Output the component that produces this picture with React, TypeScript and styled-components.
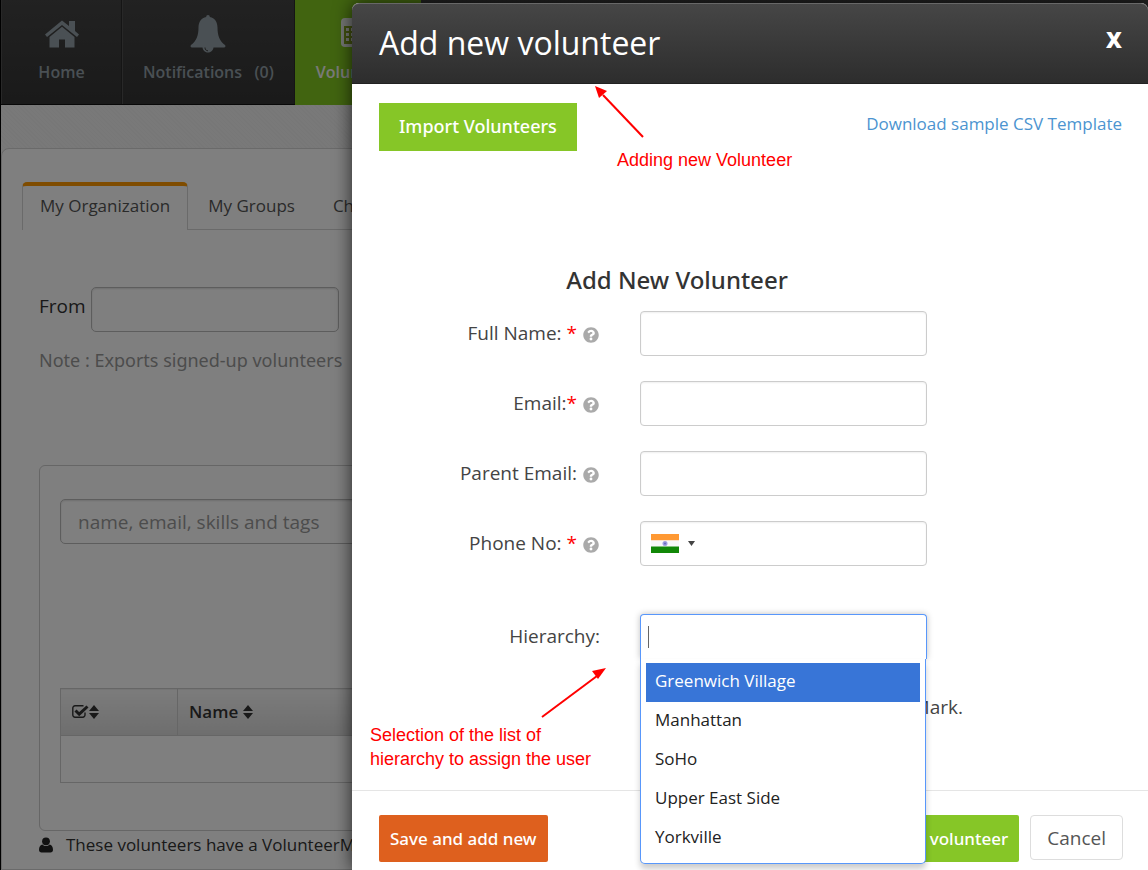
import React, { useState } from 'react';
import styled, { createGlobalStyle } from 'styled-components';
import { FaQuestionCircle } from 'react-icons/fa';

const GlobalStyle = createGlobalStyle`
  *, *::before, *::after { box-sizing: border-box; }
  body {
    margin: 0;
    background: #fff;
    color: #333;
    font: 17px/24px "Open Sans", "Noto Sans", sans-serif;
    overflow: hidden;
  }
  button, input { font: inherit; }
`;

const largeText = '19px/24px "Open Sans", "Noto Sans", sans-serif';

const Screen = styled.div`
  position: relative;
  height: 100vh;
  min-height: 870px;
  overflow: hidden;
`;

const Page = styled.div`
  height: 100%;
  display: flex;
  flex-direction: column;
  border-left: 1px solid #000;
  background: #f0f0f0 repeating-linear-gradient(45deg, #eee 0 1px, #f2f2f2 1px 3px);
`;

const Nav = styled.nav`
  display: flex;
  height: 105px;
  flex: none;
  background: linear-gradient(#444, #343434);
  border-bottom: 1px solid #111;
`;

const NavItem = styled.a<{ $active?: boolean }>`
  display: flex;
  flex-direction: column;
  align-items: center;
  gap: 6px;
  height: ${p => (p.$active ? '105px' : '104px')};
  padding: 14px 20px 0;
  min-width: ${p => (p.$active ? '124px' : '121px')};
  border-left: 1px solid ${p => (p.$active ? '#82c820' : '#505050')};
  border-right: 1px solid ${p => (p.$active ? '#82c820' : '#2a2a2a')};
  background: ${p => (p.$active ? '#82c820' : 'transparent')};
  color: ${p => (p.$active ? '#f4f4f4' : '#94a0a8')};
  font-size: 16px;
  font-weight: 600;
  text-decoration: none;
  white-space: pre;

  svg { display: block; }
`;

const Panel = styled.main`
  flex: 1;
  margin-top: 43px;
  padding: 33px 20px 0;
  border: 1px solid #d4d4d4;
  border-radius: 8px 8px 0 0;
  background: #fff;
`;

const Tabs = styled.div`
  display: flex;
  height: 48px;
  border-bottom: 1px solid #d4d4d4;
`;

const Tab = styled.button<{ $active?: boolean }>`
  height: 48px;
  padding: ${p => (p.$active ? '0 17px 4px' : '0 18px 0 20px')};
  border: 0 solid #d4d4d4;
  border-width: ${p => (p.$active ? '4px 1px 0' : '0')};
  border-top-color: #f90;
  border-radius: 5px 5px 0 0;
  background: ${p => (p.$active ? '#fff' : 'transparent')};
  color: #555;
  white-space: nowrap;
`;

const TabContent = styled.section`
  padding: 57px 17px 0;
`;

const FromRow = styled.label`
  display: flex;
  align-items: flex-start;
  gap: 5px;
  height: 44px;
  color: #333;
  font: ${largeText};
  line-height: 38px;
`;

const PageInput = styled.input<{ $wide?: boolean }>`
  width: ${p => (p.$wide ? '100%' : '248px')};
  height: 45px;
  padding: 0 17px;
  border: 1px solid #bbb;
  border-radius: 5px;
  background: #fff;
  box-shadow: inset 0 1px 2px #0002;
  font: ${largeText};
  &::placeholder { color: #999; opacity: 1; }
`;

const Note = styled.p`
  margin: 17px 0 93px;
  color: #999;
  font: 18px/24px "Noto Sans", "Open Sans", sans-serif;
  white-space: nowrap;
`;

const ListBox = styled.div`
  height: 366px;
  padding: 33px 20px 0;
  border: 1px solid #ccc;
  border-radius: 6px;
`;

const Table = styled.table`
  width: 100%;
  margin-top: 144px;
  border-collapse: collapse;
  table-layout: fixed;

  th {
    height: 47px;
    padding: 0 11px 1px;
    text-align: left;
    font-weight: 600;
    background: linear-gradient(#f8f8f8, #dcdcdc);
    white-space: nowrap;
  }
  th, td { border: 1px solid #ccc; }
  th:first-child { width: 117px; }
  td { height: 47px; }
`;

const HeadContent = styled.span<{ $gap: number }>`
  display: flex;
  align-items: center;
  gap: ${p => p.$gap}px;
  svg { flex: none; }
`;

const Legend = styled.p`
  display: flex;
  align-items: center;
  gap: 13px;
  margin: 2px 0 0;
  white-space: nowrap;
`;

const Backdrop = styled.div`
  position: absolute;
  inset: 0;
  background: rgba(0, 0, 0, 0.5);
`;

const Modal = styled.section`
  position: absolute;
  top: 3px;
  left: 352px;
  right: 0;
  bottom: 0;
  display: flex;
  flex-direction: column;
  border-radius: 7px 7px 0 0;
  background: #fff;
  box-shadow: 0 0 18px rgba(0, 0, 0, 0.7);
`;

const ModalHeader = styled.header`
  display: flex;
  align-items: center;
  justify-content: space-between;
  height: 81px;
  flex: none;
  padding: 0 26px 2px 27px;
  border-top: 1px solid #686868;
  border-bottom: 1px solid #222;
  border-radius: 7px 7px 0 0;
  background: linear-gradient(#464646, #2d2d2d);
  color: #fff;
`;

const Title = styled.h1`
  margin: 0;
  font-size: 32px;
  line-height: 40px;
  font-weight: 400;
`;

const CloseButton = styled.button`
  padding: 0 0 8px;
  border: 0;
  background: none;
  color: #fff;
  font-size: 22px;
  line-height: 24px;
  font-weight: 800;
`;

const ModalBody = styled.div`
  position: relative;
  flex: 1;
  padding: 19px 26px 0 27px;
`;

const Toolbar = styled.div`
  display: flex;
  justify-content: space-between;
  align-items: flex-start;
  a { margin-top: 9px; color: #4c94d0; text-decoration: none; }
`;

const Button = styled.button<{ $tone: 'green' | 'orange' | 'plain' }>`
  height: ${p => (p.$tone === 'plain' ? '45px' : '47px')};
  padding: 0 ${p => (p.$tone === 'plain' ? '16px' : '11px')};
  border: ${p => (p.$tone === 'plain' ? '1px solid #ddd' : '0')};
  border-radius: ${p => (p.$tone === 'plain' ? '4px' : '2px')};
  background: ${p => ({ green: '#86c627', orange: '#de601e', plain: '#fff' })[p.$tone]};
  color: ${p => (p.$tone === 'plain' ? '#555' : '#fff')};
  font: ${p => (p.$tone === 'plain' ? largeText : '500 17px/24px "Noto Sans", "Open Sans", sans-serif')};
  white-space: nowrap;
`;

const ImportButton = styled(Button)`
  height: 48px;
  padding: 0 20px 2px;
  border-radius: 0;
  font: 500 18px/24px "Noto Sans", "Open Sans", sans-serif;
`;

const Form = styled.form`
  max-width: 650px;
  margin: 113px 0 0 -27px;
`;

const FormTitle = styled.h2`
  margin: 0 0 15px;
  text-align: center;
  font: 500 24px/32px "Noto Sans", "Open Sans", sans-serif;
`;

const Field = styled.div<{ $spaced?: boolean }>`
  display: grid;
  grid-template-columns: 248px 287px;
  column-gap: 40px;
  align-items: center;
  margin-top: ${p => (p.$spaced ? '48px' : '0')};
  margin-bottom: 25px;
`;

const Label = styled.label`
  display: flex;
  align-items: center;
  justify-content: flex-end;
  padding-bottom: 2px;
  white-space: pre;
  color: #444;
  font: ${largeText};
  svg { margin: 4px 1px 0 6px; color: #aaa; }
`;

const Star = styled.span`
  color: #f00;
`;

const Control = styled.div`
  position: relative;
`;

const TextInput = styled.input<{ $open?: boolean; $phone?: boolean }>`
  display: block;
  width: 100%;
  height: 45px;
  padding: 0 12px 0 ${p => (p.$phone ? '62px' : '12px')};
  border: 1px solid ${p => (p.$open ? '#5897fb' : '#ccc')};
  border-radius: ${p => (p.$open ? '4px 4px 0 0' : '4px')};
  border-bottom-width: ${p => (p.$open ? '0' : '1px')};
  background: #fff;
  box-shadow: ${p => (p.$open ? '0 0 6px rgba(0, 0, 0, 0.25)' : 'inset 0 1px 2px #0001')};
  outline: 0;
`;

const CountryButton = styled.button`
  position: absolute;
  inset: 1px auto 1px 1px;
  display: flex;
  align-items: center;
  gap: 9px;
  padding: 0 10px;
  border: 0;
  background: none;
`;

const Caret = styled.span`
  position: absolute;
  top: 12px;
  left: 8px;
  width: 1px;
  height: 22px;
  background: #666;
`;

const Options = styled.ul`
  position: absolute;
  z-index: 2;
  top: 45px;
  left: 0;
  right: 1px;
  margin: 0;
  padding: 4px 5px 5px;
  list-style: none;
  border: 1px solid #5897fb;
  border-top: 0;
  border-radius: 0 0 5px 5px;
  background: #fff;
  box-shadow: 0 5px 6px rgba(0, 0, 0, 0.2);
`;

const Option = styled.li<{ $selected: boolean }>`
  padding: 6px 9px 9px;
  color: ${p => (p.$selected ? '#fff' : '#222')};
  background: ${p => (p.$selected ? '#3875d7' : 'transparent')};
`;

const Mandatory = styled.p`
  margin: 36px 39px 0 0;
  text-align: right;
  color: #444;
  font: ${largeText};
`;

const ModalFooter = styled.footer`
  display: flex;
  align-items: flex-start;
  gap: 11px;
  flex: none;
  height: 80px;
  padding: 24px 25px 0 27px;
  border-top: 1px solid #e5e5e5;
`;

const Spacer = styled.span`
  flex: 1;
`;

const Callout = styled.div<{ $x: number; $y: number }>`
  position: absolute;
  left: ${p => p.$x}px;
  top: ${p => p.$y}px;
  color: #f00;
  font: 18px/24px "Liberation Sans", Arial, sans-serif;
  white-space: pre;
  pointer-events: none;
`;

const Arrow = styled.svg<{ $x: number; $y: number }>`
  position: absolute;
  left: ${p => p.$x}px;
  top: ${p => p.$y}px;
  pointer-events: none;
`;

const HomeIcon = () => (
  <svg width="34" height="40" viewBox="0 0 34 40" fill="currentColor" aria-hidden="true">
    <path d="M17 6.500 0 20.500l2 2.500L17 11l15 12 2-2.500-4-3.500V7h-6v5z" />
    <path d="M17 12.800 4.500 23v10.500h9.500V25.500h6v8h9.500V23z" />
  </svg>
);

const BellIcon = () => (
  <svg width="36" height="40" viewBox="0 0 36 40" fill="currentColor" aria-hidden="true">
    <path d="M18 1c1.200 0 1.800.8 1.800 2 5 .8 7.700 5 7.700 10.500 0 8 2 13.500 7.500 17.500.8 1 .5 2.500-1 2.500H23.500C23 37 20.500 38.500 18 38.500S13 37 12.500 33.500H2C.5 33.500.2 32 1 31c5.500-4 7.500-9.500 7.500-17.500C8.500 8 11.200 3.800 16.200 3c0-1.200.6-2 1.800-2z" />
    <path d="M15 33.500c0 2 1.200 3.300 3 3.300" fill="none" stroke="#3c3c3c" strokeWidth="1" />
  </svg>
);

const RosterIcon = () => (
  <svg width="34" height="40" viewBox="0 0 34 40" aria-hidden="true">
    <rect x="0" y="4" width="34" height="29" rx="4" fill="#e8ece8" />
    <rect x="3" y="12" width="28" height="18" fill="#82a020" />
    <g fill="#e8ece8">
      {[14, 19, 24].map(y => [5, 10, 15, 20, 25].map(x => <rect key={`${x}-${y}`} x={x} y={y} width="3" height="3" />))}
    </g>
  </svg>
);

const CheckIcon = () => (
  <svg width="17" height="15" viewBox="0 0 17 15" fill="none" stroke="currentColor" aria-hidden="true">
    <path d="M13 8.500V11a2.200 2.200 0 0 1-2.200 2.200H3A2.200 2.200 0 0 1 .8 11V4A2.200 2.200 0 0 1 3 1.800h8.500" strokeWidth="1.400" />
    <path d="m3.500 6.500 3.700 3.700 8.300-7.700" strokeWidth="3" />
  </svg>
);

const UserIcon = () => (
  <svg width="14" height="16" viewBox="0 0 14 16" fill="#222" aria-hidden="true">
    <circle cx="7" cy="4.300" r="3.900" />
    <path d="M3.500 7.500C1.300 8 0 9.800 0 12.800 0 14.500 1 15.500 2.500 15.500h9c1.500 0 2.500-1 2.500-2.700 0-3-1.300-4.800-3.500-5.300-1 1-2.100 1.500-3.500 1.500s-2.500-.5-3.500-1.500z" />
  </svg>
);

const SortIcon = () => (
  <svg width="10" height="14" viewBox="0 0 10 14" fill="currentColor" aria-hidden="true">
    <path d="M5 0 10 6H0zM5 14 0 8h10z" />
  </svg>
);

const Flag = () => (
  <svg width="28" height="19" viewBox="0 0 28 19" aria-hidden="true">
    <path fill="#ff9933" d="M0 0h28v6.500H0z" />
    <path fill="#f8f8f8" d="M0 6.500h28v6H0z" />
    <path fill="#128807" d="M0 12.500h28V19H0z" />
    <circle cx="14" cy="9.500" r="2.500" fill="#9b9bdd" />
    <circle cx="14" cy="9.500" r="1" fill="#6666bb" />
  </svg>
);

type FieldInfo = { id: string; label: string; required?: boolean; phone?: boolean };

const fields: FieldInfo[] = [
  { id: 'full-name', label: 'Full Name: ', required: true },
  { id: 'email', label: 'Email:', required: true },
  { id: 'parent-email', label: 'Parent Email:' },
  { id: 'phone', label: 'Phone No: ', required: true, phone: true },
];

const places = ['Greenwich Village', 'Manhattan', 'SoHo', 'Upper East Side', 'Yorkville'];

export default function App() {
  const [selected, setSelected] = useState(0);

  return (
    <Screen>
      <GlobalStyle />
      <Page>
        <Nav>
          <NavItem href="#home"><HomeIcon />Home</NavItem>
          <NavItem href="#notifications"><BellIcon />{'Notifications   (0)'}</NavItem>
          <NavItem href="#volunteers" $active><RosterIcon />Volunteers</NavItem>
        </Nav>
        <Panel>
          <Tabs>
            <Tab $active>My Organization</Tab>
            <Tab>My Groups</Tab>
            <Tab>Check-in</Tab>
          </Tabs>
          <TabContent>
            <FromRow>From<PageInput /></FromRow>
            <Note>Note : Exports signed-up volunteers</Note>
            <ListBox>
              <PageInput $wide aria-label="Search volunteers" placeholder="name, email, skills and tags" />
              <Table>
                <thead>
                  <tr>
                    <th><HeadContent $gap={0}><CheckIcon /><SortIcon /></HeadContent></th>
                    <th><HeadContent $gap={5}>Name<SortIcon /></HeadContent></th>
                  </tr>
                </thead>
                <tbody><tr><td colSpan={2} /></tr></tbody>
              </Table>
            </ListBox>
            <Legend><UserIcon />These volunteers have a VolunteerMark</Legend>
          </TabContent>
        </Panel>
      </Page>
      <Backdrop />
      <Modal role="dialog" aria-labelledby="dialog-title">
        <ModalHeader>
          <Title id="dialog-title">Add new volunteer</Title>
          <CloseButton aria-label="Close">X</CloseButton>
        </ModalHeader>
        <ModalBody>
          <Toolbar>
            <ImportButton $tone="green">Import Volunteers</ImportButton>
            <a href="#template">Download sample CSV Template</a>
          </Toolbar>
          <Form>
            <FormTitle>Add New Volunteer</FormTitle>
            {fields.map(f => (
              <Field key={f.id}>
                <Label htmlFor={f.id}>
                  {f.label}{f.required && <Star>*</Star>}<FaQuestionCircle size={16} />
                </Label>
                <Control>
                  <TextInput id={f.id} $phone={f.phone} />
                  {f.phone && (
                    <CountryButton type="button" aria-label="Country">
                      <Flag />
                      <svg width="7" height="5" viewBox="0 0 7 5" aria-hidden="true"><path d="M0 0h7L3.500 5z" fill="#444" /></svg>
                    </CountryButton>
                  )}
                </Control>
              </Field>
            ))}
            <Field $spaced>
              <Label htmlFor="hierarchy">Hierarchy:</Label>
              <Control>
                <TextInput id="hierarchy" role="combobox" aria-expanded="true" aria-controls="places" $open />
                <Caret />
                <Options id="places" role="listbox">
                  {places.map((place, i) => (
                    <Option key={place} role="option" aria-selected={i === selected} $selected={i === selected} onMouseEnter={() => setSelected(i)}>
                      {place}
                    </Option>
                  ))}
                </Options>
              </Control>
            </Field>
            <Mandatory>Mark.</Mandatory>
          </Form>
          <Callout $x={265} $y={64}>Adding new Volunteer</Callout>
          <Arrow $x={243} $y={2} width="50" height="52" viewBox="0 0 50 52">
            <path d="M48 51 8 9" stroke="#f00" strokeWidth="2" />
            <path d="M0 0 12 5 4 12z" fill="#f00" />
          </Arrow>
          <Callout $x={18} $y={639}>{'Selection of the list of\nhierarchy to assign the user'}</Callout>
          <Arrow $x={189} $y={583} width="66" height="52" viewBox="0 0 66 52">
            <path d="M1 50 56 9" stroke="#f00" strokeWidth="2" />
            <path d="m65 1-8 11-6-8z" fill="#f00" />
          </Arrow>
        </ModalBody>
        <ModalFooter>
          <Button $tone="orange">Save and add new</Button>
          <Spacer />
          <Button $tone="green">Save volunteer</Button>
          <Button $tone="plain">Cancel</Button>
        </ModalFooter>
      </Modal>
    </Screen>
  );
}
